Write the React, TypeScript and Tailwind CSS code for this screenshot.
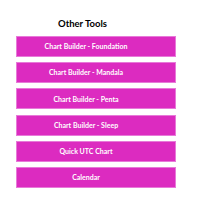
const tools = [
  'Chart Builder - Foundation',
  'Chart Builder - Mandala',
  'Chart Builder - Penta',
  'Chart Builder - Sleep',
  'Quick UTC Chart',
  'Calendar',
];

export default function App() {
  return (
    <div className="w-[200px] h-[200px] bg-white font-['Lato',sans-serif]">
      <div className="pt-[17px] pl-[16px] w-[160px]">
        <h2 className="pr-[11px] text-center text-[9.5px] font-bold leading-[13px] text-black">Other Tools</h2>
        <div className="mt-[6px] flex flex-col gap-[5.2px]">
          {tools.map((t) => (
            <button
              key={t}
              className="h-[21px] w-[160px] border border-[#e77ad8] bg-[#dc2bc0] pr-[20px] text-center text-[7px] font-bold text-white"
            >
              {t}
            </button>
          ))}
        </div>
      </div>
    </div>
  );
}
